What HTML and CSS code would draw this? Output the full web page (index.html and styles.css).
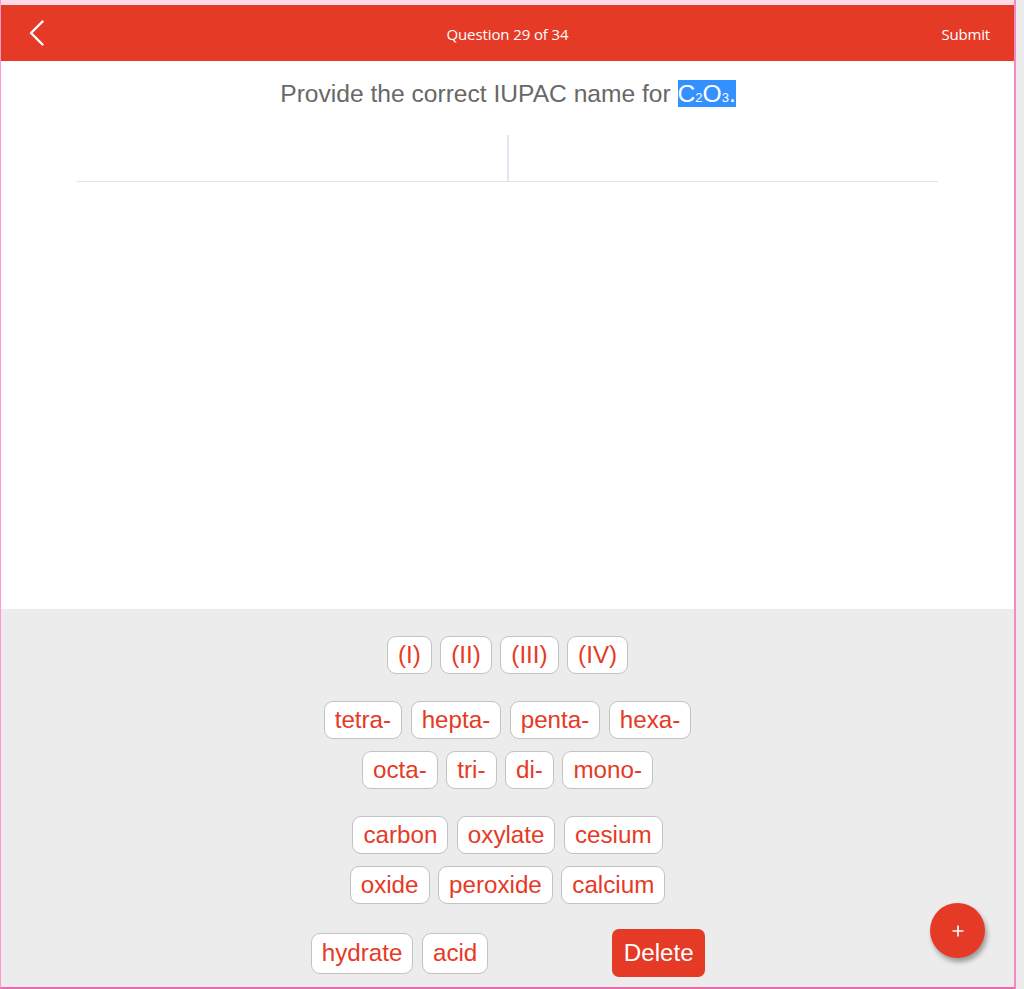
FILE: index.html
```html
<!DOCTYPE html>
<html>
<head>
<meta charset="utf-8">
<link rel="stylesheet" href="styles.css">
</head>
<body>
<div class="frame">
  <div class="topstrip"></div>
  <header class="bar">
    <button class="back" aria-label="Back">
      <svg width="16" height="26" viewBox="0 0 16 26"><path d="M13.5 1.5 L2 13 L13.5 24.5" fill="none" stroke="#fff" stroke-width="2.4" stroke-linecap="round" stroke-linejoin="round"/></svg>
    </button>
    <div class="title">Question 29 of 34</div>
    <div class="submit">Submit</div>
  </header>
  <main class="main">
    <p class="question">Provide the correct IUPAC name for <span class="hl">C<sub>2</sub>O<sub>3</sub>.</span></p>
    <div class="answer"><span class="caret"></span></div>
  </main>
  <section class="keys">
    <div class="row r1">
      <span class="chip">(I)</span><span class="chip">(II)</span><span class="chip">(III)</span><span class="chip">(IV)</span>
    </div>
    <div class="group">
      <div class="row">
        <span class="chip">tetra-</span><span class="chip">hepta-</span><span class="chip">penta-</span><span class="chip">hexa-</span>
      </div>
      <div class="row">
        <span class="chip">octa-</span><span class="chip">tri-</span><span class="chip">di-</span><span class="chip">mono-</span>
      </div>
    </div>
    <div class="group">
      <div class="row">
        <span class="chip">carbon</span><span class="chip">oxylate</span><span class="chip">cesium</span>
      </div>
      <div class="row">
        <span class="chip">oxide</span><span class="chip">peroxide</span><span class="chip">calcium</span>
      </div>
    </div>
    <div class="row last">
      <span class="chip tall">hydrate</span><span class="chip tall">acid</span><span class="spacer"></span><span class="delete">Delete</span>
    </div>
    <button class="fab" aria-label="Add">
      <svg width="12" height="12" viewBox="0 0 12 12"><path d="M6 0.5 V11.5 M0.5 6 H11.5" stroke="#fff" stroke-width="1.6"/></svg>
    </button>
  </section>
</div>
</body>
</html>
```

FILE: styles.css
```css
html, body {
  margin: 0;
  padding: 0;
}
body {
  background: #ececec;
  width: 1024px;
  height: 989px;
  overflow: hidden;
  font-family: "Liberation Sans", Arial, sans-serif;
}
.frame {
  width: 1013px;
  height: 987px;
  border-left: 1px solid #fb9ad2;
  border-right: 2px solid #f28bc4;
  border-bottom: 2px solid #e86bb0;
  display: flex;
  flex-direction: column;
  position: relative;
}
.topstrip {
  height: 5px;
  background: #fddae5;
  flex: none;
}
.bar {
  height: 56px;
  flex: none;
  background: #e53a26;
  display: grid;
  grid-template-columns: 1fr auto 1fr;
  align-items: center;
  padding: 0 24px 0 28px;
  font-family: "Open Sans", "Noto Sans", sans-serif;
  color: #fff;
  font-size: 15px;
}
.back {
  background: none;
  border: 0;
  padding: 0;
  width: 18px;
  height: 26px;
  display: flex;
  align-items: center;
  margin-top: -1px;
}
.title {
  margin-left: -4px;
  margin-top: 2px;
  letter-spacing: -0.1px;
}
.submit {
  justify-self: end;
  margin-top: 2px;
  letter-spacing: -0.2px;
}
.main {
  height: 548px;
  flex: none;
  background: #fff;
  display: flex;
  flex-direction: column;
  align-items: center;
}
.question {
  margin: 19px 0 0;
  font-size: 24.6px;
  line-height: 28px;
  color: #686868;
  padding-left: 1px;
}
.hl {
  background: #3390ff;
  color: #fff;
}
.hl sub {
  font-size: 13px;
  vertical-align: baseline;
  position: relative;
  top: 0;
}
.answer {
  margin-top: 27px;
  width: 861px;
  height: 46px;
  border-bottom: 1px solid #e2e2e2;
  display: flex;
  justify-content: center;
  transform: translateY(-4px);
}
.caret {
  width: 2px;
  height: 46px;
  background: #dfe8f1;
  margin-left: 1px;
}
.keys {
  flex: 1;
  background: #ececec;
  display: flex;
  flex-direction: column;
  align-items: center;
  padding-top: 27px;
  position: relative;
}
.group {
  display: flex;
  flex-direction: column;
  gap: 12px;
  margin-top: 27px;
}
.row {
  display: flex;
  justify-content: center;
  gap: 8.5px;
}
.chip {
  height: 36px;
  padding: 0 10px;
  background: #fff;
  border: 1px solid #c3c3c3;
  border-radius: 9px;
  color: #e53a26;
  font-size: 24.2px;
  line-height: 36px;
  display: inline-flex;
  align-items: center;
}
.last {
  margin-top: 25px;
  align-items: center;
  margin-left: 1px;
}
.chip.tall {
  height: 39px;
}
.spacer {
  width: 107px;
}
.delete {
  height: 48px;
  padding: 0 11.5px;
  background: #e53a26;
  color: #fff;
  border-radius: 7px;
  font-size: 24.2px;
  display: inline-flex;
  align-items: center;
}
.fab {
  position: absolute;
  left: 929px;
  top: 294px;
  width: 55px;
  height: 55px;
  border-radius: 50%;
  border: 0;
  padding: 0;
  background: #e53a26;
  box-shadow: 2px 4px 5px rgba(0,0,0,0.35);
  display: flex;
  align-items: center;
  justify-content: center;
}
```
